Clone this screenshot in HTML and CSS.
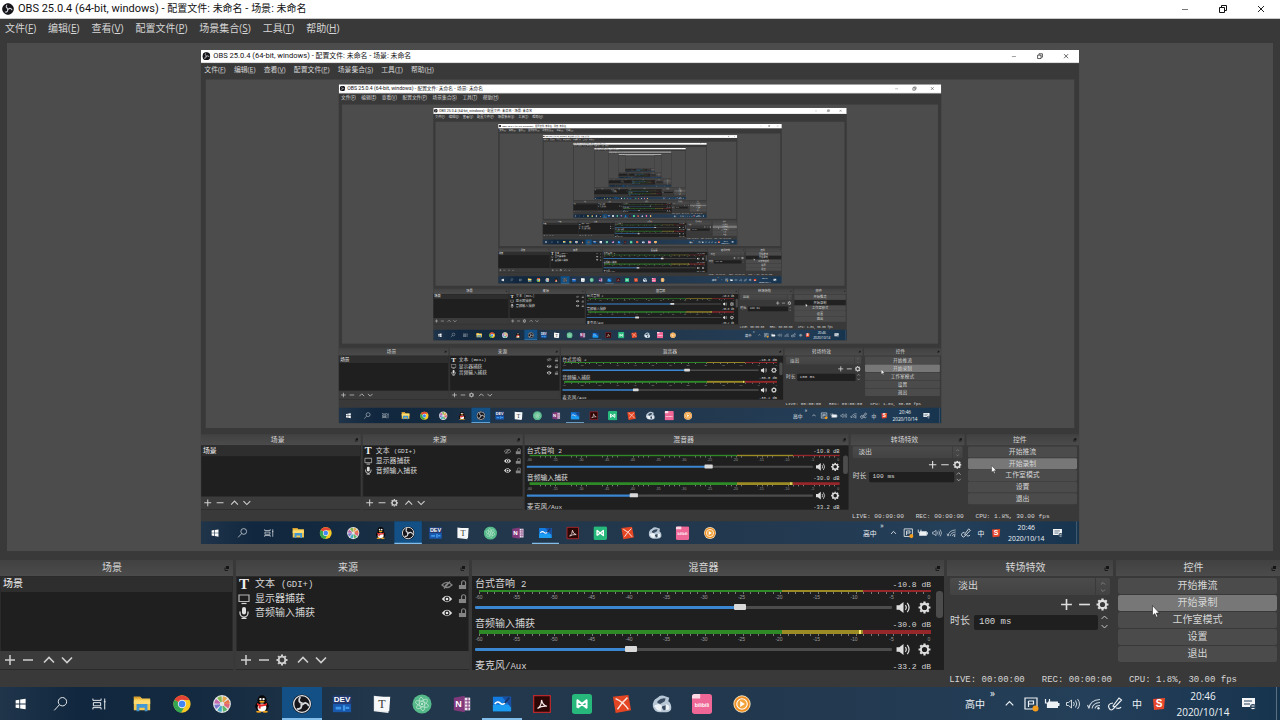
FILE: index.html
```html
<!DOCTYPE html>
<html lang="zh-CN">
<head>
<meta charset="utf-8">
<meta name="viewport" content="width=device-width, initial-scale=1">
<title>OBS 25.0.4 (64-bit, windows) - 配置文件: 未命名 - 场景: 未命名</title>
<link rel="stylesheet" href="styles.css">
</head>
<body>
<svg class="sprite" aria-hidden="true">
  <symbol id="obs" viewBox="0 0 24 24"><circle cx="12" cy="12" r="11.5" fill="#15151a"/><circle cx="12" cy="12" r="10" fill="none" stroke="var(--ring,#15151a)" stroke-width="1.6"/><g fill="none" stroke="#d5d8dc" stroke-width="2.2" stroke-linecap="round"><path d="M12 11C8.500 10.500 7.500 7 9.500 4.500"/><path d="M12 11C8.500 10.500 7.500 7 9.500 4.500" transform="rotate(120 12 12)"/><path d="M12 11C8.500 10.500 7.500 7 9.500 4.500" transform="rotate(240 12 12)"/></g></symbol>
  <symbol id="min" viewBox="0 0 10 10"><path d="M2 5.500H8" stroke="#777" fill="none"/></symbol>
  <symbol id="restore" viewBox="0 0 10 10"><path d="M1.500 3.500h5v5h-5zM3.500 3V1.500h5v5H7" stroke="#111" fill="none"/></symbol>
  <symbol id="close" viewBox="0 0 10 10"><path d="M2 2l6 6M8 2l-6 6" stroke="#222" fill="none"/></symbol>
  <symbol id="float" viewBox="0 0 6 6"><path d="M2 1h3v3H2z" fill="#151515"/><path d="M1 2.500v3h3" stroke="#1c1c1c" fill="none"/></symbol>
  <symbol id="plus" viewBox="0 0 12 12"><path d="M6 1v10M1 6h10" stroke="currentColor" stroke-width="1.500" fill="none"/></symbol>
  <symbol id="minus" viewBox="0 0 12 12"><path d="M1 6h10" stroke="currentColor" stroke-width="1.500" fill="none"/></symbol>
  <symbol id="up" viewBox="0 0 12 12"><path d="M1 8.500l5-5 5 5" stroke="currentColor" stroke-width="1.600" fill="none"/></symbol>
  <symbol id="down" viewBox="0 0 12 12"><path d="M1 3.500l5 5 5-5" stroke="currentColor" stroke-width="1.600" fill="none"/></symbol>
  <symbol id="gear" viewBox="0 0 14 14"><circle cx="7" cy="7" r="3.900" fill="none" stroke="currentColor" stroke-width="2.200"/><path d="M7 .6v2M7 11.400v2M.6 7h2M11.400 7h2M2.500 2.500l1.400 1.400M10.100 10.100l1.400 1.400M2.500 11.500l1.400-1.400M10.100 3.900l1.400-1.400" stroke="currentColor" stroke-width="2.400"/></symbol>
  <symbol id="monitor" viewBox="0 0 12 12"><path d="M1 2h10v6.500H1z" fill="none" stroke="#b8b8b8" stroke-width="1.200"/><path d="M3.500 10.500h5" stroke="#d8d8d8" stroke-width="1.200"/></symbol>
  <symbol id="mic" viewBox="0 0 12 12"><rect x="4" y="0" width="4" height="7.500" rx="2" fill="#e0e0e0"/><path d="M2 4.500V6a4 4 0 0 0 8 0V4.500M6 10v1.500M3.500 11.400h5" fill="none" stroke="#e0e0e0" stroke-width="1.200"/></symbol>
  <symbol id="eye" viewBox="0 0 12 10"><path d="M.8 5Q6-1.500 11.200 5 6 11.500.8 5z" fill="#e4e4e4"/><circle cx="6" cy="5" r="2.500" fill="#1f1f1f"/><circle cx="6" cy="5" r="1.300" fill="#e4e4e4"/></symbol>
  <symbol id="eyeoff" viewBox="0 0 12 10"><path d="M1 5Q6-.5 11 5 6 10 1 5z" fill="none" stroke="#858585" stroke-width="1.200"/><path d="M3 8.500L9 1.500M4 6l3-3" stroke="#858585" stroke-width="1.300"/></symbol>
  <symbol id="lock" viewBox="0 0 10 11"><path d="M1 5.500h8V10H1z" fill="#858585"/><path d="M4 5.500V3a2.200 2.200 0 0 1 4.400 0v2.500" fill="none" stroke="#858585" stroke-width="1.300"/></symbol>
  <symbol id="speaker" viewBox="0 0 16 14"><path d="M.5 4.500h3L8 1v12L3.500 9.500h-3z" fill="#dedede"/><path d="M10 4.500q2 2.500 0 5M12 2q4 5 0 10" fill="none" stroke="#dedede" stroke-width="1.300"/></symbol>
  <symbol id="pointer" viewBox="0 0 8 13"><path d="M.5.5v10.200l2.300-2.100 1.500 3.600 1.500-.7-1.500-3.400h3z" fill="#fff" stroke="#222" stroke-width=".6"/></symbol>

  <symbol id="win" viewBox="0 0 22 22"><path d="M4 7l4-.7v4.200H4zM9 6.100l6-.9v5.300H9zM4 11.500h4v4.200L4 15zM9 11.500h6v5.300l-6-.9z" fill="#fff"/></symbol>
  <symbol id="search" viewBox="0 0 22 22"><circle cx="11.500" cy="8.500" r="4.600" fill="none" stroke="#e6e9ec" stroke-width="1.100"/><path d="M8 12l-5.500 6" stroke="#e6e9ec" stroke-width="1.100"/></symbol>
  <symbol id="tasks" viewBox="0 0 22 22"><path d="M1 5v2h9V5M1 17v-2h9v2M1.500 9.500h8v3.500h-8zM14 5v12M13 8.500h2" fill="none" stroke="#e6e9ec" stroke-width="1.100"/></symbol>
  <symbol id="folder" viewBox="0 0 22 22"><path d="M2 3h7l2 2h9v13H2z" fill="#f5c84f"/><path d="M2 3h7l1 2H2z" fill="#d99d2b"/><path d="M2 7h18v4H2z" fill="#ffdc73"/><path d="M5 11h12v8h-3v-4H8v4H5z" fill="#4397d3"/></symbol>
  <symbol id="chrome" viewBox="0 0 22 22"><circle cx="11" cy="11" r="9.500" fill="#f9c923"/><path d="M11 11L2.800 6.300A9.500 9.500 0 0 0 10 20.500l4-7z" fill="#34a653"/><path d="M11 11L2.800 6.300A9.500 9.500 0 0 1 19.300 6.500H11z" fill="#e54335"/><circle cx="11" cy="11" r="4.600" fill="#eee"/><circle cx="11" cy="11" r="3.600" fill="#4285f4"/></symbol>
  <symbol id="wheel" viewBox="0 0 22 22"><circle cx="11" cy="11" r="9.800" fill="#e2e4e6"/><g fill="none" stroke-width="6"><circle cx="11" cy="11" r="5.500" stroke="#e0677b" stroke-dasharray="3.300 31.260"/><circle cx="11" cy="11" r="5.500" stroke="#60b768" stroke-dasharray="3.300 31.260" stroke-dashoffset="-4.320"/><circle cx="11" cy="11" r="5.500" stroke="#44a9c4" stroke-dasharray="3.300 31.260" stroke-dashoffset="-8.640"/><circle cx="11" cy="11" r="5.500" stroke="#7b78cf" stroke-dasharray="3.300 31.260" stroke-dashoffset="-12.960"/><circle cx="11" cy="11" r="5.500" stroke="#c46aae" stroke-dasharray="3.300 31.260" stroke-dashoffset="-17.280"/><circle cx="11" cy="11" r="5.500" stroke="#87b84f" stroke-dasharray="3.300 31.260" stroke-dashoffset="-21.600"/><circle cx="11" cy="11" r="5.500" stroke="#e7a74b" stroke-dasharray="3.300 31.260" stroke-dashoffset="-25.920"/><circle cx="11" cy="11" r="5.500" stroke="#e8764a" stroke-dasharray="3.300 31.260" stroke-dashoffset="-30.240"/></g></symbol>
  <symbol id="qq" viewBox="0 0 22 22"><ellipse cx="11" cy="13.500" rx="7.500" ry="6" fill="#080808"/><ellipse cx="11" cy="7" rx="5" ry="5.500" fill="#080808"/><ellipse cx="11" cy="15" rx="4.800" ry="4.500" fill="#fff"/><circle cx="9.300" cy="5.600" r="1.300" fill="#fff"/><circle cx="12.700" cy="5.600" r="1.300" fill="#fff"/><ellipse cx="11" cy="8.500" rx="3" ry="1.100" fill="#f1a51e"/><path d="M5.500 10q5.500 3 11 0v2.500q-4 1.500-7 1.200V16H7.300v-3l-1.800-.8z" fill="#e32626"/><ellipse cx="7.500" cy="19.500" rx="3" ry="1.200" fill="#f1a51e"/><ellipse cx="14.500" cy="19.500" rx="3" ry="1.200" fill="#f1a51e"/></symbol>
  <symbol id="dev" viewBox="0 0 22 22"><path d="M1 2h20v18H1z" fill="#1959ad"/><path d="M1 2h20v9H1z" fill="#223a71"/><path d="M4 14h6v3H4zM12 12.500h2.500v6H12zM15 14h4v2.500h-4z" fill="#3f97e9"/></symbol>
  <symbol id="typora" viewBox="0 0 22 22"><path d="M2 2l17 2-1 17-16-2z" fill="#e9ebed"/><path d="M3 3h17l-1 16-16-1z" fill="#f6f7f8"/></symbol>
  <symbol id="atom" viewBox="0 0 22 22"><circle cx="11" cy="11" r="10.500" fill="#55b98a"/><g fill="none" stroke="#bfe8d2" stroke-width=".8"><ellipse cx="11" cy="11" rx="7.500" ry="2.800" transform="rotate(20 11 11)"/><ellipse cx="11" cy="11" rx="7.500" ry="2.800" transform="rotate(80 11 11)"/><ellipse cx="11" cy="11" rx="7.500" ry="2.800" transform="rotate(140 11 11)"/></g><circle cx="11" cy="11" r="1.200" fill="#d2efdf"/></symbol>
  <symbol id="onenote" viewBox="0 0 22 22"><path d="M11 4h9v14h-9z" fill="#f0e3f0"/><path d="M14 7.500h6M14 11h6M14 14.500h6M17.500 4v14" stroke="#80397b" stroke-width="1"/><path d="M2 4L14 2v18L2 18z" fill="#80397b"/></symbol>
  <symbol id="board" viewBox="0 0 22 22"><path d="M1 3h20v16H1z" fill="#137be0"/><path d="M1 12h20v7H1z" fill="#1a9cf2"/><path d="M11 3h10v12z" fill="#1b4fa1"/><path d="M3 11q3-4 6-1t6-1" fill="none" stroke="#fff" stroke-width="1.700"/><path d="M14 10l5-6" stroke="#173463" stroke-width="2"/></symbol>
  <symbol id="pdf" viewBox="0 0 22 22"><path d="M1.800 1.800h18.400v18.400H1.800z" fill="#2b0706" stroke="#b5292c" stroke-width="1.400"/><path d="M6 16q4.500-3 4.500-9.500 1 6 6 7-6-.5-10.500 2.500z" fill="none" stroke="#f4e9e8" stroke-width="1.300"/></symbol>
  <symbol id="mind" viewBox="0 0 22 22"><rect x="0" y="0" width="22" height="22" rx="3" fill="#27b87b"/><path d="M6 15V7l10 8V7L6 15" fill="none" stroke="#fff" stroke-width="2.200" stroke-linejoin="round"/></symbol>
  <symbol id="xmind" viewBox="0 0 22 22"><path d="M1 3l17-2 3 17-17 3z" fill="#e44624"/><path d="M4 5q9 4 14 12M17 4Q11 9 6 17" fill="none" stroke="#fbe3db" stroke-width="1.600"/></symbol>
  <symbol id="fox" viewBox="0 0 22 22"><path d="M1 14Q0 7 6 4q3-3 7-2l6 2q-1 3-1 4 4 3 3 9-2 4-10 3-8 1-10-6z" fill="#b8c7d5"/><path d="M6 8q4-4 9-3l-1 3-5 3-3-1zM10 14l6-2v5l-3 1z" fill="#394b60"/><path d="M2 13l5-2 4 2-1 6-4-1zM15 11l4 2v4l-4 1z" fill="#edf2f6"/></symbol>
  <symbol id="bili" viewBox="0 0 22 22"><rect x="0" y="0" width="22" height="22" rx="3" fill="#ee6797"/><path d="M0 3q0-3 3-3h6v5H0z" fill="#fbd9e5"/></symbol>
  <symbol id="play" viewBox="0 0 22 22"><circle cx="11" cy="11" r="9.500" fill="#f6e5c4"/><circle cx="11" cy="11" r="8.500" fill="#ef8f24"/><circle cx="11" cy="11" r="5.800" fill="#f3a33b" stroke="#fff" stroke-width="1.200"/><path d="M9 7.800v6.400l5-3.200z" fill="#fff"/></symbol>

  <symbol id="ime" viewBox="0 0 16 16"><path d="M2 2h12v11H2zM5.500 5h5v3h-5M5.500 11V5" fill="none" stroke="#eef2f5" stroke-width="1.200"/><circle cx="12.500" cy="12.500" r="3" fill="#f39b1d"/></symbol>
  <symbol id="battery" viewBox="0 0 16 16"><path d="M4 5.500h10v6.500H4z" fill="#eef2f5"/><path d="M14 7h1.500v3H14z" fill="#eef2f5"/><path d="M1.500 3v4h4V3M3.500 7v5" stroke="#eef2f5" stroke-width="1.200" fill="none"/></symbol>
  <symbol id="vol" viewBox="0 0 16 16"><path d="M1.500 6.500h2l3-2.500v8l-3-2.500h-2zM8.500 6q1.500 2 0 4M10.500 4.500q2.500 3.500 0 7M12.500 3q4 5 0 10" fill="none" stroke="#dfe5ea" stroke-width=".9"/></symbol>
  <symbol id="wifi" viewBox="0 0 16 16"><path d="M3 12.500Q4 4 14 3.500M6 12.500Q7 7 14 6.500M9 12.500q.5-3 5-3M1.500 9L3 12.500" fill="none" stroke="#cbd4dc" stroke-width="1.100"/><circle cx="12.500" cy="12.300" r="1.200" fill="#dfe5ea"/></symbol>
  <symbol id="pen" viewBox="0 0 16 16"><path d="M6 10l6-8 2.500 2L8 11zM6 7Q0 8 2 12t5 0l1-1M9 12q4 1 5-1" fill="none" stroke="#eef2f5" stroke-width="1.200"/></symbol>
  <symbol id="sogou" viewBox="0 0 16 16"><path d="M2 3l12-1-1 11-10 1z" fill="#e8472b"/></symbol>
  <symbol id="note" viewBox="0 0 16 16"><path d="M1 2h13v9h-2v3l-3-3H1z" fill="#f3f5f7"/><path d="M3 5h8M3 8h6" stroke="#29435b"/><circle cx="12" cy="11" r="3" fill="#29435b"/><path d="M10.500 10h3M10.500 12.500h3" stroke="#f3f5f7"/></symbol>
</svg>

<div class="desktop">
  <header class="titlebar">
    <svg class="app-icon"><use href="#obs"/></svg>
    <h1 class="title">OBS 25.0.4 (64-bit, windows) - <span class="han">配置文件</span>: <span class="han">未命名</span> - <span class="han">场景</span>: <span class="han">未命名</span></h1>
    <button class="win-btn" aria-label="最小化"><svg><use href="#min"/></svg></button>
    <button class="win-btn" aria-label="还原"><svg><use href="#restore"/></svg></button>
    <button class="win-btn" aria-label="关闭"><svg><use href="#close"/></svg></button>
  </header>
  <nav class="menubar">
    <button class="menu">文件(<u>F</u>)</button>
    <button class="menu">编辑(<u>E</u>)</button>
    <button class="menu">查看(<u>V</u>)</button>
    <button class="menu">配置文件(<u>P</u>)</button>
    <button class="menu">场景集合(<u>S</u>)</button>
    <button class="menu">工具(<u>T</u>)</button>
    <button class="menu">帮助(<u>H</u>)</button>
  </nav>
  <main class="preview"></main>

  <div class="docks">
    <section class="dock">
      <h2 class="dock-title">场景<svg class="float"><use href="#float"/></svg></h2>
      <div class="list">
        <div class="scene">场景</div>
      </div>
      <div class="tools">
        <button class="tool" aria-label="添加场景"><svg><use href="#plus"/></svg></button>
        <button class="tool" aria-label="移除场景"><svg><use href="#minus"/></svg></button>
        <button class="tool tool-gap" aria-label="上移场景"><svg><use href="#up"/></svg></button>
        <button class="tool" aria-label="下移场景"><svg><use href="#down"/></svg></button>
      </div>
    </section>

    <section class="dock">
      <h2 class="dock-title">来源<svg class="float"><use href="#float"/></svg></h2>
      <div class="list">
        <div class="source"><span class="type-t">T</span><span class="source-name">文本 <span class="latin">(GDI+)</span></span><svg class="eye"><use href="#eyeoff"/></svg><svg class="lock"><use href="#lock"/></svg></div>
        <div class="source"><svg class="type"><use href="#monitor"/></svg><span class="source-name">显示器捕获</span><svg class="eye"><use href="#eye"/></svg><svg class="lock"><use href="#lock"/></svg></div>
        <div class="source"><svg class="type"><use href="#mic"/></svg><span class="source-name">音频输入捕获</span><svg class="eye"><use href="#eye"/></svg><svg class="lock"><use href="#lock"/></svg></div>
      </div>
      <div class="tools">
        <button class="tool" aria-label="添加来源"><svg><use href="#plus"/></svg></button>
        <button class="tool" aria-label="移除来源"><svg><use href="#minus"/></svg></button>
        <button class="tool" aria-label="来源属性"><svg><use href="#gear"/></svg></button>
        <button class="tool tool-gap" aria-label="上移来源"><svg><use href="#up"/></svg></button>
        <button class="tool" aria-label="下移来源"><svg><use href="#down"/></svg></button>
      </div>
    </section>

    <section class="dock">
      <h2 class="dock-title">混音器<svg class="float"><use href="#float"/></svg></h2>
      <div class="mixer">
        <div class="channels">
          <div class="channel">
            <div class="channel-head"><span>台式音响 <span class="latin">2</span></span><span class="db">-10.8 dB</span></div>
            <div class="meter"></div>
            <div class="ticks"></div>
            <div class="scale"><span>-60</span><span>-55</span><span>-50</span><span>-45</span><span>-40</span><span>-35</span><span>-30</span><span>-25</span><span>-20</span><span>-15</span><span>-10</span><span>-5</span><span>0</span></div>
            <div class="volume"><input class="slider" type="range" min="0" max="100" value="64" style="--v:64%" aria-label="台式音响 2 音量"><button class="icon-btn" aria-label="静音"><svg class="speaker"><use href="#speaker"/></svg></button><button class="icon-btn" aria-label="设置"><svg class="gear"><use href="#gear"/></svg></button></div>
          </div>
          <div class="channel">
            <div class="channel-head"><span>音频输入捕获</span><span class="db">-30.0 dB</span></div>
            <div class="meter meter-live"><i class="peak"></i></div>
            <div class="ticks"></div>
            <div class="scale"><span>-60</span><span>-55</span><span>-50</span><span>-45</span><span>-40</span><span>-35</span><span>-30</span><span>-25</span><span>-20</span><span>-15</span><span>-10</span><span>-5</span><span>0</span></div>
            <div class="volume"><input class="slider" type="range" min="0" max="100" value="37" style="--v:37%" aria-label="音频输入捕获 音量"><button class="icon-btn" aria-label="静音"><svg class="speaker"><use href="#speaker"/></svg></button><button class="icon-btn" aria-label="设置"><svg class="gear"><use href="#gear"/></svg></button></div>
          </div>
          <div class="channel">
            <div class="channel-head"><span>麦克风<span class="latin">/Aux</span></span><span class="db">-33.2 dB</span></div>
          </div>
        </div>
        <div class="scrollbar"><div class="scroll-thumb"></div></div>
      </div>
    </section>

    <section class="dock">
      <h2 class="dock-title">转场特效<svg class="float"><use href="#float"/></svg></h2>
      <div class="transitions">
        <div class="combo"><select class="select" aria-label="转场特效"><option>淡出</option></select><span class="arrows"><svg><use href="#up"/></svg><svg><use href="#down"/></svg></span></div>
        <div class="trans-tools">
          <button class="icon-btn" aria-label="添加"><svg class="gear"><use href="#plus"/></svg></button>
          <button class="icon-btn" aria-label="移除"><svg class="gear"><use href="#minus"/></svg></button>
          <button class="icon-btn" aria-label="属性"><svg class="gear"><use href="#gear"/></svg></button>
        </div>
        <label class="duration">时长<input class="field" type="text" value="100 ms"><span class="arrows arrows-light"><svg><use href="#up"/></svg><svg><use href="#down"/></svg></span></label>
      </div>
    </section>

    <section class="dock">
      <h2 class="dock-title">控件<svg class="float"><use href="#float"/></svg></h2>
      <div class="controls">
        <button class="control">开始推流</button>
        <button class="control control-hover">开始录制</button>
        <button class="control">工作室模式</button>
        <button class="control">设置</button>
        <button class="control">退出</button>
        <svg class="pointer"><use href="#pointer"/></svg>
      </div>
    </section>
  </div>

  <div class="status"><span>LIVE: 00:00:00</span><span>REC: 00:00:00</span><span>CPU: 1.8%, 30.00 fps</span></div>

  <footer class="taskbar">
    <button class="task" aria-label="开始"><svg><use href="#win"/></svg></button>
    <button class="task" aria-label="搜索"><svg><use href="#search"/></svg></button>
    <button class="task" aria-label="任务视图"><svg><use href="#tasks"/></svg></button>
    <button class="task" aria-label="文件资源管理器"><svg><use href="#folder"/></svg></button>
    <button class="task" aria-label="Chrome"><svg><use href="#chrome"/></svg></button>
    <button class="task" aria-label="色轮"><svg><use href="#wheel"/></svg></button>
    <button class="task" aria-label="QQ"><svg><use href="#qq"/></svg></button>
    <button class="task task-active" aria-label="OBS"><svg><use href="#obs"/></svg></button>
    <button class="task" aria-label="Dev-C++"><svg><use href="#dev"/></svg><span class="mark mark-dev">DEV</span></button>
    <button class="task" aria-label="Typora"><svg><use href="#typora"/></svg><span class="mark mark-typora">T</span></button>
    <button class="task" aria-label="Atom"><svg><use href="#atom"/></svg></button>
    <button class="task" aria-label="OneNote"><svg><use href="#onenote"/></svg><span class="mark mark-note">N</span></button>
    <button class="task task-open" aria-label="白板"><svg><use href="#board"/></svg></button>
    <button class="task" aria-label="Acrobat"><svg><use href="#pdf"/></svg></button>
    <button class="task" aria-label="思维导图"><svg><use href="#mind"/></svg></button>
    <button class="task" aria-label="XMind"><svg><use href="#xmind"/></svg></button>
    <button class="task" aria-label="浏览器"><svg><use href="#fox"/></svg></button>
    <button class="task" aria-label="哔哩哔哩"><svg><use href="#bili"/></svg><span class="mark mark-bili">bilibili</span></button>
    <button class="task" aria-label="播放器"><svg><use href="#play"/></svg></button>
    <div class="tray">
      <span class="tray-text">高中</span><span class="more">»</span>
      <svg class="chev"><use href="#up"/></svg>
      <svg><use href="#ime"/></svg><svg><use href="#battery"/></svg><svg><use href="#vol"/></svg><svg><use href="#wifi"/></svg><svg><use href="#pen"/></svg>
      <span class="tray-ime">中</span>
      <span class="sogou"><svg><use href="#sogou"/></svg><span class="mark mark-sogou">S</span></span>
      <time class="clock" datetime="2020-10-14T20:46"><span>20:46</span><span>2020/10/14</span></time>
      <svg class="note"><use href="#note"/></svg>
      <span class="show-desktop"></span>
    </div>
  </footer>
</div>
<script src="capture.js"></script>
</body>
</html>
```

FILE: styles.css
```css
* { box-sizing: border-box; }
html, body { margin: 0; height: 100%; background: #393939; overflow: hidden; }
button, input, select { font: inherit; color: inherit; border: 0; padding: 0; margin: 0; background: none; border-radius: 0; outline: 0; }
svg { display: block; flex: none; }
.sprite { position: absolute; width: 0; height: 0; }

.desktop {
  display: flex;
  flex-direction: column;
  width: 100%;
  height: 100vh;
  overflow: hidden;
  background: #393939;
  color: #d6d6d6;
  font: 10px/14px "Liberation Mono", "Noto Sans CJK SC", monospace;
}
.latin { font-size: 9px; }

.titlebar { display: flex; align-items: center; height: 19px; padding-left: 2px; background: #fff; border-bottom: 1px solid #c9c9c9; color: #111; }
.app-icon { width: 12px; height: 12px; }
.title { flex: 1; margin: 0 0 0 4px; font: 400 11px/18px Roboto, "Noto Sans CJK SC", sans-serif; white-space: nowrap; }
.han { font-size: 10px; }
.win-btn { display: grid; place-items: center; width: 38px; height: 18px; }
.win-btn svg { width: 10px; height: 10px; }

.menubar { display: flex; align-items: center; gap: 12px; height: 18px; padding-left: 5px; }
.menu { font: 10px/18px "Open Sans", "Noto Sans CJK SC", sans-serif; white-space: nowrap; }

.preview { position: relative; flex: 1; min-height: 0; margin: 6px 7px 9px; background: #4c4c4c; overflow: hidden; }
.capture { position: absolute; left: 50%; top: 50%; width: var(--screen-w); height: var(--screen-h); transform: translate(-50%, -50%) scale(var(--fit)); }

.docks { display: grid; grid-template-columns: 233fr 233fr 472fr 166fr 164fr; gap: 3px; height: 110px; flex: none; }
.dock { display: flex; flex-direction: column; min-width: 0; min-height: 0; }
.dock-title { position: relative; margin: 0; height: 16px; flex: none; padding-right: 9px; background: linear-gradient(#414141, #4b4b4b); font: inherit; line-height: 18px; text-align: center; }
.float { position: absolute; right: 3px; top: 5px; width: 6px; height: 6px; }
.list { flex: 1; background: #1f1f1f; border: 1px solid #2b2b2b; border-width: 1px 1px 0; }
.scene { height: 15px; padding-left: 2px; background: #2e2e2e; line-height: 16px; color: #f4f4f4; }
.source { display: flex; align-items: center; height: 15px; padding: 0 1px; }
.source:nth-child(n + 2) { height: 14px; }
.type { width: 12px; height: 12px; }
.type-t { width: 12px; font: 700 15px/15px "Liberation Serif", serif; text-align: center; color: #eee; }
.source-name { flex: 1; margin-left: 5px; line-height: 15px; white-space: nowrap; }
.eye { width: 12px; height: 10px; }
.lock { width: 9px; height: 10px; margin-left: 5px; }
.tools { display: flex; align-items: center; gap: 6px; height: 19px; padding-left: 4px; border-bottom: 1px solid #2a2a2a; background: #3b3b3b; color: #cfcfcf; }
.tool, .tool svg { display: block; width: 12px; height: 12px; }
.tool-gap { margin-left: 3px; }

.mixer { display: flex; flex: 1; min-height: 0; background: #1f1f1f; overflow: hidden; }
.channels { flex: 1; min-width: 0; padding-left: 3px; }
.channel-head { display: flex; justify-content: space-between; height: 14px; padding-top: 2px; line-height: 14px; }
.db { font-size: 8px; white-space: pre; }
.meter { height: 2px; margin-left: 4px; background: linear-gradient(90deg, #2d8a26 67%, #9a8b25 67% 85%, #95262a 85%); }
.meter-live { height: 4px; }
.peak { display: block; width: 2px; height: 4px; margin-left: 84%; background: #f5eb73; }
.ticks { height: 2px; margin-left: 4px; background: repeating-linear-gradient(90deg, #7a7a7a 0 1px, transparent 1px calc(100% / 60)); }
.scale { display: flex; justify-content: space-between; height: 4px; margin-right: -2px; font: 5px/6px "Liberation Sans", sans-serif; color: #9b9b9b; }
.scale span { width: 8px; text-align: center; }
.volume { display: flex; align-items: center; height: 18px; gap: 4px; }
.volume .icon-btn + .icon-btn { margin-left: 3px; }
.slider { flex: 1; min-width: 0; height: 12px; -webkit-appearance: none; appearance: none; }
.slider::-webkit-slider-runnable-track { height: 3px; border-radius: 1px; background: linear-gradient(90deg, #3a86d0 var(--v), #4c4c4c var(--v)); }
.slider::-webkit-slider-thumb { -webkit-appearance: none; width: 12px; height: 6px; margin-top: -2px; border-radius: 1px; background: #d9d9d9; }
.icon-btn { display: block; color: #dedede; }
.speaker { width: 15px; height: 13px; }
.gear { width: 13px; height: 13px; }
.scrollbar { width: 9px; margin-left: 4px; padding: 15px 1px 0; }
.scroll-thumb { height: 27px; border-radius: 3px; background: #4c4c4c; }

.transitions { display: flex; flex-direction: column; padding: 2px 3px 0; }
.combo { display: flex; height: 17px; background: linear-gradient(#4b4b4b, #424242); border-radius: 2px; }
.select { flex: 1; min-width: 0; padding: 1px 0 0 8px; -webkit-appearance: none; appearance: none; }
.select option { background: #333; }
.arrows { display: flex; flex-direction: column; align-items: center; justify-content: center; gap: 2px; width: 15px; border-left: 1px solid #3a3a3a; color: #999; }
.arrows svg { width: 6px; height: 5px; }
.arrows-light { width: 12px; border: 0; color: #d2d2d2; }
.arrows-light svg { width: 9px; height: 7px; }
.trans-tools { display: flex; justify-content: flex-end; gap: 5px; padding: 3px 1px 2px; }
.duration { display: flex; align-items: center; height: 18px; }
.field { flex: 1; min-width: 0; height: 15px; margin-left: 4px; padding-left: 5px; background: #1f1f1f; border-radius: 2px; font-size: 9px; }

.controls { position: relative; display: flex; flex-direction: column; gap: 1px; padding: 2px 3px 0 2px; }
.control { height: 16px; padding-top: 1px; border-radius: 2px; background: #4b4b4b; line-height: 15px; }
.control-hover { background: #777; }
.capture-late > .docks .control-hover { background: #222; }
.pointer { position: absolute; left: 36px; top: 29px; width: 8px; height: 13px; }

.status { display: flex; flex: none; justify-content: flex-end; gap: 17px; height: 17px; padding-right: 43px; font-size: 9px; line-height: 20px; white-space: nowrap; }

.taskbar { display: flex; flex: none; height: 33px; padding-left: 2px; background: linear-gradient(90deg, #20354a, #10273f 6%, #13293f 14%, #22374b 30%, #22384e 60%, #243f59 85%, #17344f); }
.task { display: grid; place-items: center; width: 40px; }
.task > * { grid-area: 1 / 1; }
.task svg { width: 20px; height: 20px; }
.task-active { background: #125086; --ring: #e4e6e8; }
.task-active, .task-open { box-shadow: inset 0 -2px #83bde9; }
.mark { color: #fff; font: 700 8px/10px "Liberation Sans", sans-serif; }
.mark-dev { padding-bottom: 8px; }
.mark-typora { color: #333; font: 12px/14px "Liberation Serif", serif; }
.mark-note { padding-right: 7px; font-size: 9px; }
.mark-bili { padding-top: 3px; font-size: 5px; line-height: 6px; }
.tray { display: flex; align-items: center; gap: 5px; margin-left: auto; color: #eef2f5; font: 10px/16px "Open Sans", "Noto Sans CJK SC", sans-serif; }
.tray svg { width: 16px; height: 16px; }
.tray .chev { width: 9px; height: 9px; margin: 0 4px 0 5px; }
.more { align-self: flex-start; line-height: 12px; }
.tray-ime { width: 18px; text-align: center; }
.sogou { display: grid; place-items: center; }
.sogou > * { grid-area: 1 / 1; }
.mark-sogou { font-size: 10px; line-height: 12px; }
.clock { display: flex; flex-direction: column; width: 62px; text-align: center; font-size: 10px; line-height: 16px; }
.tray .note { margin: 0 14px 0 2px; }
.show-desktop { align-self: stretch; width: 4px; border-left: 1px solid #5b6f82; }
```

FILE: capture.js
```js
// The display capture shows the desktop inside its own preview.
const desktop = document.querySelector('.desktop');
const preview = desktop.querySelector('.preview');
const DEPTH = 10;

function fitCapture() {
  const root = document.documentElement.style;
  const w = desktop.clientWidth;
  const h = desktop.clientHeight;
  const margin = 14;
  const fit = Math.min((preview.clientWidth - margin) / w, (preview.clientHeight - margin) / h);
  root.setProperty('--screen-w', w + 'px');
  root.setProperty('--screen-h', h + 'px');
  root.setProperty('--fit', fit);
}

const blank = desktop.cloneNode(true);
let inner = null;
for (let level = DEPTH; level > 0; level--) {
  const copy = blank.cloneNode(true);
  copy.classList.add('capture');
  copy.inert = true;
  if (level === 3 || level === 4) copy.classList.add('capture-late');
  if (inner) copy.querySelector('.preview').append(inner);
  inner = copy;
}
preview.append(inner);
fitCapture();
window.addEventListener('resize', fitCapture);
```
